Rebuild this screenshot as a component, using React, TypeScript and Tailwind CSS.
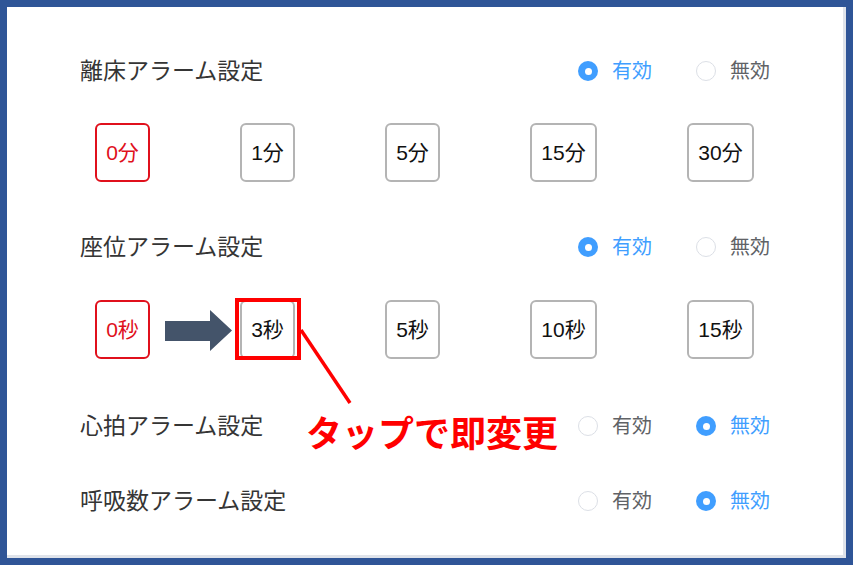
import React from 'react';

const FONT = '"Liberation Sans", "Noto Sans CJK JP", sans-serif';

function Radio({ checked, label }: { checked: boolean; label: string }) {
    return (
        <div className="flex items-center gap-[14px]">
            {checked ? (
                <span className="flex h-[20px] w-[20px] items-center justify-center rounded-full bg-[#409eff]">
                    <span className="h-[7px] w-[7px] rounded-full bg-white" />
                </span>
            ) : (
                <span className="h-[20px] w-[20px] rounded-full border border-[#dcdfe6] bg-white" />
            )}
            <span className={`text-[20px] leading-none ${checked ? 'text-[#409eff]' : 'text-[#606266]'}`}>
                {label}
            </span>
        </div>
    );
}

function Header({ title, enabled }: { title: string; enabled: boolean }) {
    return (
        <div className="flex h-[24px] items-center justify-between">
            <span className="text-[23px] leading-none text-[#353535]">{title}</span>
            <div className="flex items-center gap-[44px]">
                <Radio checked={enabled} label="有効" />
                <Radio checked={!enabled} label="無効" />
            </div>
        </div>
    );
}

function Choice({ label, selected, wide }: { label: string; selected?: boolean; wide?: boolean }) {
    return (
        <div
            className={`flex h-[59px] items-center justify-center rounded-[6px] border-2 bg-white text-[21px] leading-none ${
                wide ? 'w-[67px]' : 'w-[55px]'
            } ${selected ? 'border-[#e0101c] text-[#e0101c]' : 'border-[#b4b4b4] text-[#111]'}`}
        >
            {label}
        </div>
    );
}

export default function App() {
    return (
        <div
            className="relative h-[565px] w-[853px] border-[7px] border-[#2f5597] bg-white"
            style={{ fontFamily: FONT }}
        >
            <div className="h-full border-b-[3px] border-r-[3px] border-[#dfe3ea] pl-[73px] pr-[73px] pt-[52px]">
                <Header title="離床アラーム設定" enabled />
                <div className="mt-[40px] flex gap-[90px] pl-[15px]">
                    <Choice label="0分" selected />
                    <Choice label="1分" />
                    <Choice label="5分" />
                    <Choice label="15分" wide />
                    <Choice label="30分" wide />
                </div>

                <div className="mt-[53px]">
                    <Header title="座位アラーム設定" enabled />
                </div>
                <div className="mt-[41px] flex gap-[90px] pl-[15px]">
                    <Choice label="0秒" selected />
                    <Choice label="3秒" />
                    <Choice label="5秒" />
                    <Choice label="10秒" wide />
                    <Choice label="15秒" wide />
                </div>

                <div className="mt-[55px]">
                    <Header title="心拍アラーム設定" enabled={false} />
                </div>
                <div className="mt-[51px]">
                    <Header title="呼吸数アラーム設定" enabled={false} />
                </div>
            </div>

            {/* annotation: arrow, highlight and callout */}
            <svg className="pointer-events-none absolute left-0 top-0" width="839" height="551">
                <polygon points="158,314 203,314 203,303 225,323.5 203,344 203,334 158,334" fill="#44546a" />
                <rect x="230" y="293" width="62" height="58" fill="none" stroke="#ff0000" strokeWidth="4" />
                <line x1="294" y1="323" x2="343" y2="396" stroke="#ff0000" strokeWidth="3.5" />
            </svg>
            <div
                className="absolute left-[299px] top-[406px] text-[36px] font-bold leading-none text-[#ff0000]"
                style={{ fontFamily: '"Noto Sans CJK JP", sans-serif' }}
            >
                タップで即変更
            </div>
        </div>
    );
}
